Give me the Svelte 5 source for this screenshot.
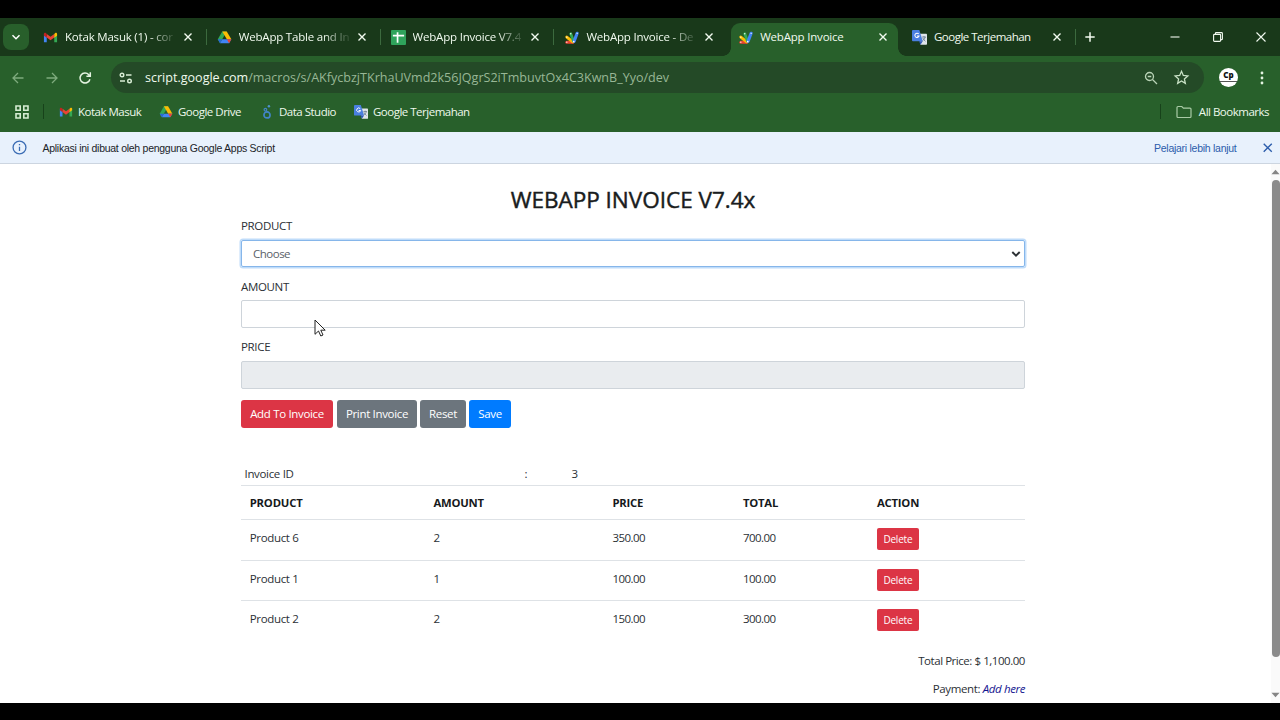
<script>
  const tabs = [
    { icon: 'gmail', title: 'Kotak Masuk (1) - cor' },
    { icon: 'drive', title: 'WebApp Table and In' },
    { icon: 'sheets', title: 'WebApp Invoice V7.4' },
    { icon: 'script', title: 'WebApp Invoice - De' },
    { icon: 'script', title: 'WebApp Invoice', active: true },
    { icon: 'translate', title: 'Google Terjemahan' }
  ];
  const bookmarks = [
    { icon: 'gmail', title: 'Kotak Masuk', cls: 'b1' },
    { icon: 'drive', title: 'Google Drive', cls: 'b2' },
    { icon: 'studio', title: 'Data Studio', cls: 'b3' },
    { icon: 'translate', title: 'Google Terjemahan', cls: 'b4' }
  ];
  const rows = [
    { product: 'Product 6', amount: 2, price: '350.00', total: '700.00' },
    { product: 'Product 1', amount: 1, price: '100.00', total: '100.00' },
    { product: 'Product 2', amount: 2, price: '150.00', total: '300.00' }
  ];
</script>

{#snippet logo(name)}
  <svg class="logo" viewBox="0 0 16 16">
    {#if name === 'gmail'}
      <path d="M1 4v9h3V7z" fill="#4285f4" />
      <path d="M15 4v9h-3V7z" fill="#34a853" />
      <path d="M4 4.2V8l4 3 4-3V4.2L8 7.2z" fill="#ea4335" />
      <path d="M1 4.2V6l3 2.2V4.2L3 3.3C2.200 2.700 1 3.200 1 4.200z" fill="#c5221f" />
      <path d="M15 4.2V6l-3 2.200V4.200l1-.9c.8-.6 2-.1 2 .9z" fill="#fbbc04" />
    {:else if name === 'drive'}
      <path d="M5.600 1.500h4.800L8 5.700 3.200 14 .8 9.900z" fill="#34a853" />
      <path d="M5.600 1.500h4.800l4.900 8.400h-4.800z" fill="#fbbc04" />
      <path d="M5.600 9.900h9.700L12.900 14H3.200z" fill="#4285f4" />
      <path d="M10.500 9.900h4.800L12.900 14z" fill="#ea4335" />
      <path d="M5.600 9.900L3.200 14 .8 9.900z" fill="#2867d8" />
    {:else if name === 'sheets'}
      <rect x="0" y="0" width="16" height="16" rx="1" fill="#2fa45b" />
      <path d="M7 2.500v11M2 6h12" stroke="#fff" stroke-width="1.800" fill="none" />
    {:else if name === 'script'}
      <path d="M3 13h6.500" stroke="#ea4335" stroke-width="3.200" stroke-linecap="round" />
      <path d="M3 7.500L9 12.500" stroke="#fbbc04" stroke-width="3.200" stroke-linecap="round" />
      <path d="M7.200 4L10 11.500" stroke="#34a853" stroke-width="3" stroke-linecap="round" />
      <path d="M14 3.500L10.800 12" stroke="#4285f4" stroke-width="3.400" stroke-linecap="round" />
      <circle cx="10.400" cy="12.300" r=".9" fill="#fff" />
      <circle cx="3" cy="7.600" r=".7" fill="#fff" />
      <circle cx="3" cy="13" r=".7" fill="#fff" />
      <circle cx="7.200" cy="4" r=".7" fill="#fff" />
      <circle cx="14" cy="3.500" r=".7" fill="#fff" />
    {:else if name === 'translate'}
      <path d="M7 4h8.200c.5 0 .8.300.8.800V15c0 .5-.3.800-.8.800H9z" fill="#dfe5ea" />
      <path d="M1 0h6.800l3.700 12H1c-.6 0-1-.4-1-1V1c0-.6.400-1 1-1z" fill="#4a7fe0" />
      <path d="M7.500 12h4L9 15.800z" fill="#2f58b5" />
      <path d="M7.200 4.300A2.300 2.300 0 1 0 7.600 6.300H5.300" stroke="#fff" stroke-width="1.100" fill="none" />
      <path d="M10.800 7.500h4M12.800 6.500v1M14 7.500c-.3 1.700-1.400 3-2.800 4M11.500 8.500c.6 1.400 1.500 2.500 2.800 3.500" stroke="#66788c" stroke-width=".9" fill="none" />
    {:else if name === 'studio'}
      <circle cx="8" cy="11.300" r="3.500" fill="none" stroke="#4285c8" stroke-width="1.900" />
      <circle cx="6.200" cy="5.300" r="1.500" fill="none" stroke="#4285c8" stroke-width="1.300" />
      <circle cx="10.200" cy="1.500" r="1.400" fill="#4f92cf" />
    {/if}
  </svg>
{/snippet}

{#snippet cross()}
  <svg class="cross" viewBox="0 0 10 10"><path d="M1.500 1.500l7 7M8.500 1.500l-7 7" /></svg>
{/snippet}

<div class="screen">
  <header class="strip">
    <button class="search" aria-label="Tabs">
      <svg viewBox="0 0 10 10"><path d="M1.500 3.300L5 6.800l3.500-3.500" /></svg>
    </button>
    <nav class="tabs">
      {#each tabs as tab, i}
        <div class="tab" class:active={tab.active} class:sep={i !== 3 && i !== 4}>
          {@render logo(tab.icon)}
          <span class="title">{tab.title}</span>
          {@render cross()}
        </div>
      {/each}
    </nav>
    <svg class="plus" viewBox="0 0 10 10"><path d="M5 .3v9.400M.3 5h9.400" /></svg>
    <div class="window">
      <svg viewBox="0 0 10 10"><path d="M.5 5h9" /></svg>
      <svg viewBox="0 0 10 10"><rect x=".6" y="2.400" width="7" height="7" rx=".8" /><path d="M2.500 2.400V1.200c0-.4.200-.6.600-.6H8.500c.5 0 .9.400.9.900V7c0 .4-.2.600-.6.600H7.600" /></svg>
      <svg viewBox="0 0 10 10"><path d="M.5 .5l9 9M9.500 .5l-9 9" /></svg>
    </div>
  </header>

  <div class="toolbar">
    <div class="nav">
      <svg class="dim" viewBox="0 0 14 14"><path d="M12.500 7H2M7 2L2 7l5 5" /></svg>
      <svg class="dim" viewBox="0 0 14 14"><path d="M1.500 7H12M7 2l5 5-5 5" /></svg>
      <svg class="reload" viewBox="0 0 14 14"><path d="M11.900 8.200A5 5 0 1 1 10.800 3.700L12 5M12.300 1.300V5.200H8.400" /></svg>
    </div>
    <div class="omnibox">
      <svg class="tune" viewBox="0 0 14 12"><circle cx="3" cy="3" r="1.800" /><path d="M7 3h5.500M1 9h5" /><circle cx="10.500" cy="9" r="1.800" /></svg>
      <span class="url"><b>script.google.com</b><i>/macros/s/AKfycbzjTKrhaUVmd2k56JQgrS2iTmbuvtOx4C3KwnB_Yyo/dev</i></span>
      <svg class="lens" viewBox="0 0 14 14"><circle cx="5.500" cy="5.500" r="4" /><path d="M8.500 8.500l4.500 4.500M3.700 5.500h3.600" /></svg>
      <svg class="star" viewBox="0 0 14 14"><path d="M7 1.200l1.700 3.900 4.200.4-3.200 2.800.9 4.200L7 10.300l-3.600 2.200.9-4.200L1.100 5.500l4.200-.4z" /></svg>
    </div>
    <div class="avatar"><span>Cp</span></div>
    <svg class="dots" viewBox="0 0 4 16"><circle cx="2" cy="3" r="1.400" /><circle cx="2" cy="8" r="1.400" /><circle cx="2" cy="13" r="1.400" /></svg>
  </div>

  <div class="bookmarks">
    <svg class="apps" viewBox="0 0 14 14"><path d="M1 1h4.200v4.200H1zM8.800 1H13v4.200H8.800zM1 8.800h4.200V13H1zM8.800 8.800H13V13H8.800z" /></svg>
    <span class="rule"></span>
    {#each bookmarks as mark}
      <div class="mark {mark.cls}">{@render logo(mark.icon)}<span>{mark.title}</span></div>
    {/each}
    <div class="all">
      <span class="rule"></span>
      <svg viewBox="0 0 16 14"><path d="M1 2.500c0-.6.400-1 1-1h3.800l1.600 1.600H14c.6 0 1 .4 1 1v7.400c0 .6-.4 1-1 1H2c-.6 0-1-.4-1-1z" /></svg>
      <span>All Bookmarks</span>
    </div>
  </div>

  <div class="notice">
    <svg class="info" viewBox="0 0 14 14"><circle cx="7" cy="7" r="6" /><path d="M7 6.200V10.200M7 3.700V5" /></svg>
    <span class="message">Aplikasi ini dibuat oleh pengguna Google Apps Script</span>
    <span class="more">Pelajari lebih lanjut</span>
    {@render cross()}
  </div>

  <div class="page">
    <main>
      <h1>WEBAPP INVOICE V7.4x</h1>
      <div class="group">
        <span class="label">PRODUCT</span>
        <div class="control focus"><span>Choose</span>
          <svg viewBox="0 0 10 10"><path d="M1.300 3L5 6.700 8.700 3" /></svg>
        </div>
      </div>
      <div class="group">
        <span class="label">AMOUNT</span>
        <div class="control"></div>
      </div>
      <div class="group">
        <span class="label">PRICE</span>
        <div class="control readonly"></div>
      </div>
      <div class="actions">
        <button class="danger add">Add To Invoice</button>
        <button class="print">Print Invoice</button>
        <button class="reset">Reset</button>
        <button class="save">Save</button>
      </div>
      <div class="invoice"><span>Invoice ID</span><span>:</span><span>3</span></div>
      <div class="row head"><span>PRODUCT</span><span>AMOUNT</span><span>PRICE</span><span>TOTAL</span><span>ACTION</span></div>
      {#each rows as row}
        <div class="row">
          <span>{row.product}</span><span>{row.amount}</span><span class="num">{row.price}</span><span class="num">{row.total}</span>
          <span><button class="danger delete">Delete</button></span>
        </div>
      {/each}
      <p class="total">Total Price: $ 1,100.00</p>
      <p class="payment">Payment: <em>Add here</em></p>
    </main>
    <aside class="scroll">
      <svg viewBox="0 0 10 6"><path d="M5 .5L9.500 5.500H.5z" /></svg>
      <div class="thumb"></div>
      <svg viewBox="0 0 10 6"><path d="M5 5.500L.5 .5h9z" /></svg>
    </aside>
    <svg class="pointer" viewBox="0 0 12 18"><path d="M1 1v14.300l3.500-3.300 2.300 5 2.200-1-2.200-4.800h4.400z" /></svg>
  </div>
</div>

<style>
  :global(body) { margin: 0; background: #000; }
  * { box-sizing: border-box; }
  .screen {
    width: 1280px; height: 720px; padding: 18px 0 17px; overflow: hidden;
    background: #000; display: flex; flex-direction: column;
    font-family: "Open Sans", "Noto Sans", sans-serif; font-size: 11.500px; white-space: nowrap;
  }
  svg { display: block; flex: none; fill: none; overflow: visible; }
  button { font: inherit; letter-spacing: inherit; border: 0; padding: 0; margin: 0; }

  .strip { height: 38px; flex: none; display: flex; align-items: center; background: #19391a; color: #f1faef; }
  .search { width: 26px; height: 26px; margin: 0 4px 0 3px; border-radius: 8px; background: #285f2b; display: grid; place-items: center; }
  .search svg { width: 10px; height: 10px; stroke: #fff; stroke-width: 1.500; }
  .tabs { display: flex; height: 100%; }
  .tab { width: 173.800px; height: 100%; display: flex; align-items: center; padding: 0 14px 0 10px; position: relative; }
  .logo { width: 15px; height: 15px; }
  .tab .title { flex: none; margin-left: 7px; letter-spacing: -0.200px; line-height: 20px; mask-image: linear-gradient(90deg, #000 84px, rgba(0, 0, 0, 0.15) 108px); }
  .tab.active .title, .tab:last-child .title { mask-image: none; }
  .tab:last-child .title { letter-spacing: -0.500px; }
  .cross { width: 10px; height: 10px; stroke: #f2faf0; stroke-width: 1.400; }
  .tab .cross { margin-left: auto; }
  .tab.sep::after { content: ""; position: absolute; right: 0; top: 11px; width: 1px; height: 16px; background: #3c6a3e; }
  .tab.active { isolation: isolate; }
  .tab.active::before { content: ""; position: absolute; z-index: -1; left: 3px; right: 4px; top: 5px; bottom: 0; border-radius: 9px 9px 0 0; background: #28602b; }
  .tab.active::after {
    content: ""; position: absolute; z-index: -1; left: -5px; right: -4px; bottom: 0; height: 8px;
    background: radial-gradient(circle at 0 0, transparent 7.500px, #28602b 8px) left / 8px 8px no-repeat,
      radial-gradient(circle at 100% 0, transparent 7.500px, #28602b 8px) right / 8px 8px no-repeat;
  }
  .plus { width: 10px; height: 10px; margin-left: 9px; stroke: #f2faf0; stroke-width: 1.500; }
  .window { margin-left: auto; display: flex; gap: 33px; padding-right: 14px; }
  .window svg { width: 10px; height: 10px; stroke: #f2faf0; stroke-width: 1.100; }

  .toolbar { height: 44px; flex: none; display: flex; align-items: center; background: #28602b; padding-bottom: 1px; }
  .nav { display: flex; align-items: center; gap: 19.500px; padding-left: 11px; }
  .nav svg { width: 14px; height: 14px; stroke: #e4f3e1; stroke-width: 1.500; }
  .nav .dim { stroke: #7eab7d; stroke-width: 1.300; }
  .omnibox { width: 1093px; height: 31px; margin-left: 19px; border-radius: 16px; background: #244a27; display: flex; align-items: center; padding: 0 15px 0 8px; }
  .tune { width: 14px; height: 12px; stroke: #d9eed6; stroke-width: 1.400; }
  .url { margin-left: 12px; font-size: 12.550px; flex: 1; }
  .url b { font-weight: 400; color: #f0faee; }
  .url i { font-style: normal; color: #98b796; }
  .lens { width: 14px; height: 14px; stroke: #b9d3b6; stroke-width: 1.300; margin-right: 16px; }
  .star { width: 15px; height: 15px; stroke: #c9e2c6; stroke-width: 1.200; }
  .avatar { width: 19px; height: 19px; margin-left: 15px; border-radius: 50%; background: linear-gradient(#fff 13px, #555 13px, #555 14px, #fff 14px); display: flex; justify-content: center; }
  .avatar span { font-size: 8px; line-height: 13px; font-weight: 800; color: #111; }
  .dots { width: 4px; height: 16px; margin-left: 22px; fill: #e4f3e1; }

  .bookmarks { height: 32px; flex: none; display: flex; align-items: center; background: #28602b; color: #eef8ec; padding: 0 11px 9px 15px; letter-spacing: -0.500px; }
  .apps { width: 14px; height: 14px; stroke: #d5ecd2; stroke-width: 1.600; }
  .rule { width: 1px; height: 15px; background: #17421a; margin-left: 14px; }
  .mark { display: flex; align-items: center; gap: 5px; }
  .mark .logo { width: 14px; height: 14px; }
  .b1 { margin-left: 15px; width: 100px; }
  .b2 { width: 101px; }
  .b3 { width: 94px; }
  .all { margin-left: auto; display: flex; align-items: center; }
  .all svg { width: 16px; height: 14px; stroke: #a9cba6; stroke-width: 1.200; margin: 0 7px 0 15px; }

  .notice { height: 32px; flex: none; display: flex; align-items: center; background: #e8f1fc; border-bottom: 1px solid #ccd5e0; padding: 0 7px 0 12px; font-family: "Liberation Sans", Arial, sans-serif; font-size: 10.500px; letter-spacing: -0.270px; color: #202328; }
  .info { width: 15px; height: 15px; stroke: #3a6cb4; stroke-width: 1.200; margin-right: 15.500px; }
  .more { margin-left: auto; margin-right: 25px; color: #2b5cab; }
  .notice .cross { width: 11.500px; height: 11.500px; stroke: #2b5cab; stroke-width: 1.200; }

  .page { flex: 1; min-height: 0; display: flex; background: #fff; position: relative; color: #2b3035; overflow: hidden; letter-spacing: -0.330px; }
  main { width: 784px; margin-left: 241px; padding-top: 22px; }
  h1 { margin: 0; height: 28px; line-height: 28px; font-size: 22.500px; font-weight: 400; letter-spacing: 0; -webkit-text-stroke: 0.450px #191c20; text-align: center; color: #191c20; }
  .label { display: block; height: 25.700px; line-height: 24px; }
  .group { height: 60.700px; }
  .control { height: 27.500px; border: 1px solid #ced4da; border-radius: 2px; display: flex; align-items: center; justify-content: space-between; padding: 1px 3px 0 11px; color: #5a6168; letter-spacing: -0.500px; }
  .control svg { width: 10px; height: 10px; stroke: #2c3034; stroke-width: 1.900; }
  .control.focus { border-color: #86b6ea; box-shadow: 0 0 0 1.500px #bfdcfa; }
  .control.readonly { background: #e9ecef; }
  .actions { display: flex; gap: 3px; padding-top: 4px; height: 68.700px; }
  .actions button { height: 27.500px; border-radius: 3px; background: #6c757d; color: #fff; }
  .danger { background: #dc3545 !important; color: #fff; }
  .actions .add { width: 92px; margin-right: 1px; }
  .actions .print { width: 80px; }
  .actions .reset { width: 46px; }
  .actions .save { width: 42px; background: #007bff; }
  .invoice { display: grid; grid-template-columns: 280px 47px 1fr; padding-left: 3.500px; height: 20px; line-height: 17px; }
  .row { display: grid; grid-template-columns: 183.700px 179px 130.500px 134px 1fr; padding-left: 8.700px; height: 40.500px; padding-top: 8px; line-height: 20px; border-top: 1px solid #dee2e6; }
  .row.head { height: 34.500px; padding-top: 7px; font-weight: 700; font-size: 11.300px; color: #16191c; letter-spacing: -0.200px; }
  .num { letter-spacing: -0.550px; }
  .delete { display: block; width: 42px; height: 22px; font-size: 10px; border-radius: 2px; line-height: 20px; letter-spacing: -0.200px; }
  .total, .payment { margin: 0; text-align: right; line-height: 20px; letter-spacing: -0.450px; }
  .payment { letter-spacing: -0.380px; }
  .total { padding-top: 10px; height: 38.500px; }
  em { color: #15158f; }
  .scroll { margin-left: auto; width: 9px; background: #fafafa; display: flex; flex-direction: column; align-items: center; padding: 5px 0; }
  .scroll svg { width: 9px; height: 6px; fill: #858585; }
  .thumb { width: 8px; height: 477px; margin: 5px 0 auto 1px; border-radius: 4px; background: #8b8b8b; }
  .pointer { position: absolute; left: 314px; top: 155px; width: 12px; height: 18px; fill: #fff; stroke: #222; stroke-width: 1; }
</style>
